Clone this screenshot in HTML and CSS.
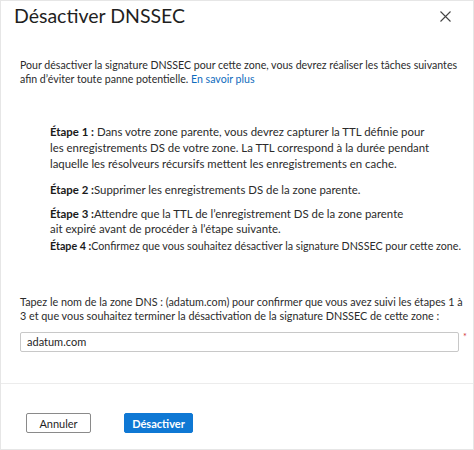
FILE: index.html
```html
<!DOCTYPE html>
<html lang="fr">
<head>
<meta charset="utf-8">
<link rel="stylesheet" href="styles.css">
</head>
<body>
<div class="dialog">
  <header class="head">
    <h1 class="title">Désactiver DNSSEC</h1>
    <button class="close" aria-label="Fermer">
      <svg width="11" height="11" viewBox="0 0 11 11"><path d="M0.5 0.5 L10.5 10.5 M10.5 0.5 L0.5 10.5" stroke="#444" stroke-width="1.1" fill="none"/></svg>
    </button>
  </header>
  <div class="body">
    <p class="intro">Pour désactiver la signature DNSSEC pour cette zone, vous devrez réaliser les tâches suivantes<br>afin d’éviter toute panne potentielle. <a class="link" href="#">En savoir plus</a></p>
    <div class="steps">
      <p class="step step-1"><b>Étape 1 :</b> Dans votre zone parente, vous devrez capturer la TTL définie pour<br>les enregistrements DS de votre zone. La TTL correspond à la durée pendant<br>laquelle les résolveurs récursifs mettent les enregistrements en cache.</p>
      <p class="step step-2"><b>Étape 2 :</b>Supprimer les enregistrements DS de la zone parente.</p>
      <p class="step step-3"><b>Étape 3 :</b>Attendre que la TTL de l’enregistrement DS de la zone parente<br>ait expiré avant de procéder à l’étape suivante.</p>
      <p class="step step-4"><b>Étape 4 :</b>Confirmez que vous souhaitez désactiver la signature DNSSEC pour cette zone.</p>
    </div>
    <p class="confirm">Tapez le nom de la zone DNS : (adatum.com) pour confirmer que vous avez suivi les étapes 1 à<br>3 et que vous souhaitez terminer la désactivation de la signature DNSSEC de cette zone :</p>
    <div class="field">
      <div class="input">adatum.com</div>
      <span class="req">*</span>
    </div>
  </div>
  <footer class="foot">
    <button class="btn btn-secondary">Annuler</button>
    <button class="btn btn-primary">Désactiver</button>
  </footer>
</div>
</body>
</html>
```
FILE: styles.css
```css
* { box-sizing: border-box; }
html, body { margin: 0; padding: 0; }
body {
  width: 474px;
  height: 450px;
  background: #fff;
  font-family: Lato, "Open Sans", sans-serif;
  color: #252525;
}
.dialog {
  width: 474px;
  height: 450px;
  border: 1px solid #e6e6e6;
  display: flex;
  flex-direction: column;
}
.head {
  display: flex;
  justify-content: space-between;
  align-items: flex-start;
  padding: 0 22px 0 13px;
  height: 44px;
  flex: none;
}
.title {
  margin: 0;
  font-size: 19.5px;
  font-weight: 400;
  line-height: 30px;
  color: #1f1f1f;
}
.close {
  margin-top: 10px;
  border: 0;
  background: none;
  padding: 0;
  width: 11px;
  height: 11px;
  display: flex;
}
.body {
  flex: 1;
  padding: 13px 5px 0 19px;
  white-space: nowrap;
}
.intro {
  margin: 0;
  font-size: 10.6px;
  line-height: 14px;
  color: #2b2b2b;
}
.link { color: #0f6cbd; text-decoration: none; }
.steps {
  padding: 38px 0 0 30px;
}
.step {
  margin: 0;
  font-size: 11.4px;
  line-height: 16px;
  color: #2b2b2b;
}
.step-1 { margin-bottom: 10px; }
.step-2 { margin-bottom: 8px; }
.step-3 { line-height: 15px; margin-bottom: 2px; }
.step-4 { font-size: 10.7px; }
.step b { font-weight: 700; color: #1a1a1a; }
.confirm {
  margin: 41px 0 9px;
  font-size: 10.8px;
  line-height: 14px;
  color: #2b2b2b;
}
.field {
  display: flex;
  align-items: flex-start;
  gap: 4px;
}
.input {
  flex: 1;
  height: 20px;
  border: 1px solid #c8c8c8;
  border-radius: 2px;
  padding: 0 6px;
  font-size: 11px;
  line-height: 18px;
  color: #1f1f1f;
}
.req {
  width: 5px;
  color: #d13438;
  font-size: 9px;
  line-height: 10px;
  margin-top: 0;
}
.foot {
  flex: none;
  border-top: 1px solid #ececec;
  height: 66px;
  display: flex;
  align-items: flex-start;
  gap: 33px;
  padding: 29px 0 0 25px;
}
.btn {
  height: 20px;
  font-family: inherit;
  font-size: 11px;
  border-radius: 2px;
  padding: 0;
  cursor: pointer;
}
.btn-secondary {
  width: 65px;
  background: #fff;
  border: 1px solid #8a8a8a;
  color: #1f1f1f;
}
.btn-primary {
  width: 69px;
  background: #0f78d4;
  border: 1px solid #0f78d4;
  color: #fff;
  font-weight: 700;
}
```
